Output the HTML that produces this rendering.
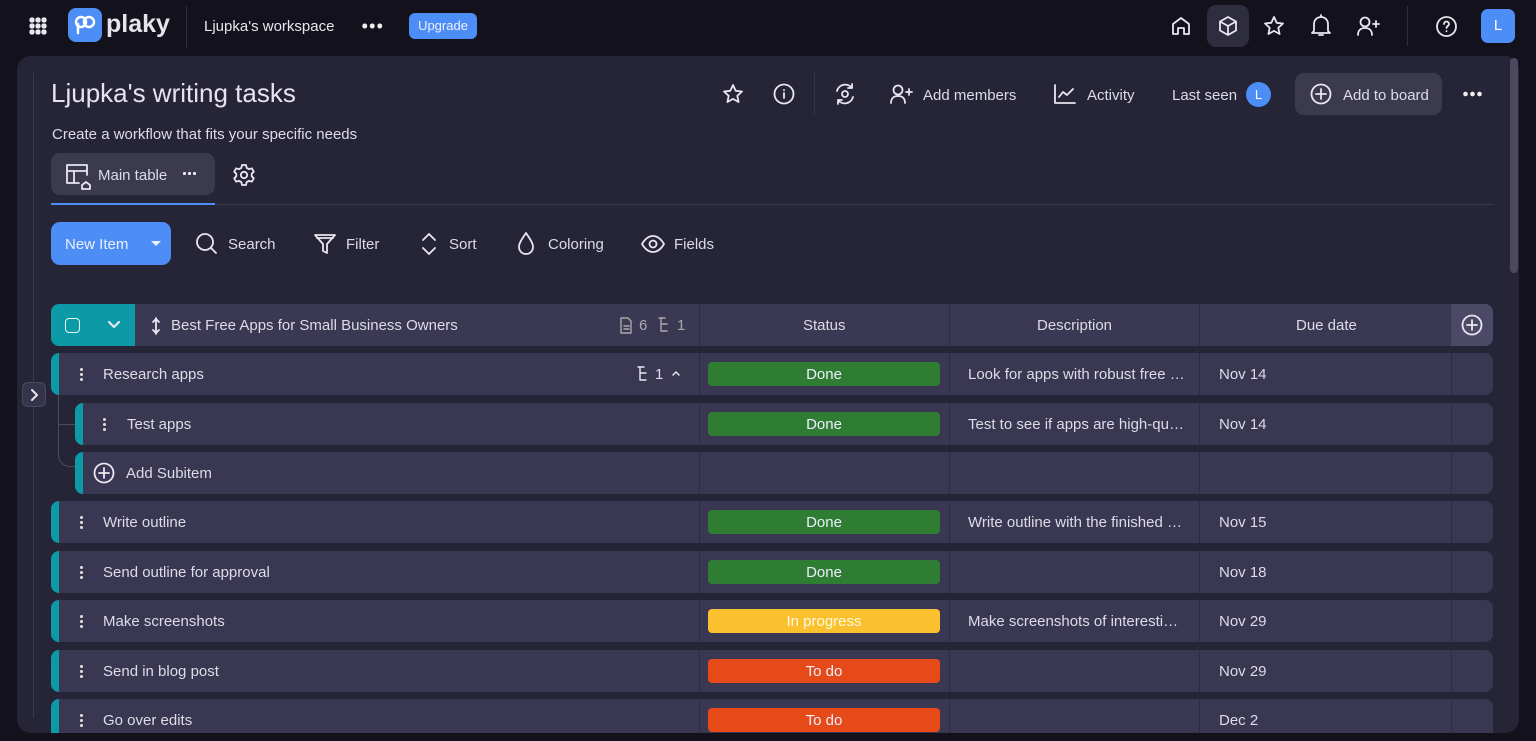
<!DOCTYPE html>
<html><head><meta charset="utf-8"><style>
*{box-sizing:border-box;margin:0;padding:0}
body{width:1536px;height:741px;overflow:hidden;background:#13121c;font-family:"Liberation Sans",sans-serif;color:#e4e3ee;position:relative}
.a{position:absolute}
svg{position:absolute;fill:none;stroke:#e8e7f0;stroke-width:1.8;stroke-linecap:round;stroke-linejoin:round}
.t{position:absolute;white-space:nowrap;font-size:15px;color:#dddce8}
.row{position:absolute;left:51px;width:1442px;height:42px;background:#393752;border-radius:8px;overflow:hidden}
.row .t{top:13px !important}
.row .st{position:absolute;left:0;top:0;width:8px;height:42px;background:#0b9aa6}
.row .div{position:absolute;top:0;width:1px;height:42px;background:#2c2b40}
.pill{position:absolute;left:657px;top:9px;width:232px;height:24px;border-radius:4px;text-align:center;line-height:25px;font-size:15px;color:#eef}
.dots{position:absolute;width:3px;height:14px;top:14px;background:radial-gradient(circle,#ddd 1.4px,transparent 1.6px) 0 0/3px 5px repeat-y}
</style></head><body>
<div class="a" style="left:29px;top:17px;width:18px;height:18px;background:radial-gradient(circle,#e8e8f0 2.6px,transparent 2.8px) 0 0/6px 6px"></div>
<div class="a" style="left:68px;top:8px;width:34px;height:34px;background:#4c8df6;border-radius:8px"></div>
<svg style="left:72px;top:12px" width="26" height="26" viewBox="0 0 26 26"><circle cx="9" cy="10" r="5" stroke="#fff" stroke-width="2.5"/><circle cx="17" cy="10" r="5" stroke="#fff" stroke-width="2.5"/><path d="M6 12v9" stroke="#fff" stroke-width="2.5"/></svg>
<div class="t" style="left:106px;top:10px;font-size:25px;font-weight:bold;color:#e4e4ea">plaky</div>
<div class="a" style="left:186px;top:6px;width:1px;height:42px;background:#2e2d3c"></div>
<div class="t" style="left:204px;top:18px;color:#e6e6ee">Ljupka's workspace</div>
<div class="a" style="left:361px;top:23px;width:22px;height:6px;background:radial-gradient(circle,#eee 2.4px,transparent 2.6px) 0 0/7.5px 6px repeat-x"></div>
<div class="a" style="left:409px;top:13px;width:68px;height:26px;background:#4c8df6;border-radius:6px;font-size:13px;text-align:center;line-height:26px;color:#eef">Upgrade</div>
<svg style="left:1170px;top:15px" width="22" height="22" viewBox="0 0 22 22"><path d="M3 19V9l8-6 8 6v10H14v-6h-6v6z"/></svg>
<div class="a" style="left:1207px;top:5px;width:42px;height:42px;background:#2e2d3d;border-radius:9px"></div>
<svg style="left:1217px;top:15px" width="22" height="22" viewBox="0 0 22 22"><path d="M11 2l8 4.5v9L11 20l-8-4.5v-9zM3 6.5l8 4.5 8-4.5M11 11v9"/></svg>
<svg style="left:1263px;top:15px" width="22" height="22" viewBox="0 0 22 22"><path d="M11 2l2.7 5.8 6.3.7-4.7 4.3 1.3 6.2L11 15.9 5.4 19l1.3-6.2L2 8.5l6.3-.7z"/></svg>
<svg style="left:1310px;top:14px" width="22" height="24" viewBox="0 0 22 24"><path d="M4 17V10a7 7 0 0114 0v7l2 2H2zM9 21h4M11 1v2"/></svg>
<svg style="left:1356px;top:15px" width="26" height="22" viewBox="0 0 26 22"><circle cx="9" cy="7" r="4.5"/><path d="M2 20c0-5 3-7 7-7s7 2 7 7M20 6v6M17 9h6"/></svg>
<div class="a" style="left:1407px;top:6px;width:1px;height:40px;background:#2e2d3c"></div>
<svg style="left:1435px;top:15px" width="23" height="23" viewBox="0 0 23 23"><circle cx="11.5" cy="11.5" r="9.5"/><path d="M9 9a2.5 2.5 0 115 0c0 2-2.5 2-2.5 4M11.5 16v.3"/></svg>
<div class="a" style="left:1481px;top:9px;width:34px;height:34px;background:#4c8df6;border-radius:7px;text-align:center;line-height:34px;font-size:15px;color:#fff">L</div>

<div class="a" style="left:17px;top:56px;width:1502px;height:677px;background:#262537;border-radius:14px"></div>
<div class="a" style="left:33px;top:73px;width:1px;height:645px;background:#3a394e"></div>
<div class="a" style="left:1510px;top:58px;width:8px;height:215px;background:#4a4960;border-radius:4px"></div>
<div class="t" style="left:51px;top:78px;font-size:26px;color:#e6e5ef">Ljupka's writing tasks</div>
<div class="t" style="left:52px;top:126px;font-size:15px">Create a workflow that fits your specific needs</div>
<svg style="left:722px;top:83px" width="22" height="22" viewBox="0 0 22 22"><path d="M11 2l2.7 5.8 6.3.7-4.7 4.3 1.3 6.2L11 15.9 5.4 19l1.3-6.2L2 8.5l6.3-.7z"/></svg>
<svg style="left:773px;top:83px" width="22" height="22" viewBox="0 0 22 22"><circle cx="11" cy="11" r="9.5"/><path d="M11 10v5M11 7v.3"/></svg>
<div class="a" style="left:814px;top:73px;width:1px;height:42px;background:#34334a"></div>
<svg style="left:833px;top:82px" width="24" height="24" viewBox="0 0 24 24"><path d="M4 9a8.5 8.5 0 0115-3M20 15a8.5 8.5 0 01-15 3M19 2v4h-4M5 22v-4h4"/><circle cx="12" cy="12" r="3"/></svg>
<svg style="left:889px;top:83px" width="26" height="22" viewBox="0 0 26 22"><circle cx="9" cy="7" r="4.5"/><path d="M2 20c0-5 3-7 7-7s7 2 7 7M20 6v6M17 9h6"/></svg>
<div class="t" style="left:923px;top:87px">Add members</div>
<svg style="left:1053px;top:83px" width="24" height="22" viewBox="0 0 24 22"><path d="M2 2v18h20M6 14l4-5 4 3 6-6"/></svg>
<div class="t" style="left:1087px;top:87px">Activity</div>
<div class="t" style="left:1172px;top:87px">Last seen</div>
<div class="a" style="left:1246px;top:82px;width:25px;height:25px;background:#4c8df6;border-radius:50%;text-align:center;line-height:25px;font-size:13px;color:#fff">L</div>
<div class="a" style="left:1295px;top:73px;width:147px;height:42px;background:#3b3a4f;border-radius:9px"></div>
<svg style="left:1310px;top:83px" width="22" height="22" viewBox="0 0 22 22"><circle cx="11" cy="11" r="9.5"/><path d="M11 6v10M6 11h10"/></svg>
<div class="t" style="left:1343px;top:87px">Add to board</div>
<div class="a" style="left:1462px;top:91px;width:20px;height:6px;background:radial-gradient(circle,#eee 2.2px,transparent 2.4px) 0 0/7px 6px repeat-x"></div>

<div class="a" style="left:51px;top:153px;width:164px;height:42px;background:#3b3a4f;border-radius:9px"></div>
<svg style="left:65px;top:163px" width="30" height="30" viewBox="0 0 30 30"><path d="M14 20H2V2h20v10M2 8h20M9 8v12"/><path d="M17 26v-4l4-3 4 3v4z"/></svg>
<div class="t" style="left:98px;top:167px">Main table</div>
<div class="a" style="left:182px;top:171px;width:14px;height:5px;background:radial-gradient(circle,#eee 1.5px,transparent 1.7px) 0 0/5px 5px repeat-x"></div>
<svg style="left:232px;top:163px" width="24" height="24" viewBox="0 0 24 24"><circle cx="12" cy="12" r="3.2"/><path d="M10 2h4l.6 2.8 2.4 1.4 2.8-.9 2 3.4-2.1 2v2.6l2.1 2-2 3.4-2.8-.9-2.4 1.4L14 22h-4l-.6-2.8-2.4-1.4-2.8.9-2-3.4 2.1-2v-2.6l-2.1-2 2-3.4 2.8.9 2.4-1.4z"/></svg>
<div class="a" style="left:51px;top:204px;width:1442px;height:1px;background:#3b3a50"></div>
<div class="a" style="left:51px;top:203px;width:164px;height:2px;background:#4c8df6"></div>

<div class="a" style="left:51px;top:222px;width:120px;height:43px;background:#4c8df6;border-radius:9px"></div>
<div class="t" style="left:65px;top:236px;color:#eef">New Item</div>
<div class="a" style="left:151px;top:241px;border-left:5px solid transparent;border-right:5px solid transparent;border-top:5px solid #eef"></div>
<svg style="left:195px;top:232px" width="24" height="24" viewBox="0 0 24 24"><circle cx="10" cy="10" r="8"/><path d="M16 16l5 5"/></svg>
<div class="t" style="left:228px;top:236px">Search</div>
<svg style="left:313px;top:232px" width="24" height="24" viewBox="0 0 24 24"><path d="M2 3h20l-8 9v9l-4-2v-7z M4 6h16"/></svg>
<div class="t" style="left:346px;top:236px">Filter</div>
<svg style="left:419px;top:232px" width="20" height="24" viewBox="0 0 20 24"><path d="M4 8l6-6 6 6M4 16l6 6 6-6"/></svg>
<div class="t" style="left:449px;top:236px">Sort</div>
<svg style="left:516px;top:231px" width="20" height="26" viewBox="0 0 20 26"><path d="M10 2C6 8 3 12 3 16a7 7 0 0014 0c0-4-3-8-7-14z"/></svg>
<div class="t" style="left:548px;top:236px">Coloring</div>
<svg style="left:640px;top:232px" width="26" height="24" viewBox="0 0 26 24"><path d="M2 12c3-5 7-8 11-8s8 3 11 8c-3 5-7 8-11 8s-8-3-11-8z"/><circle cx="13" cy="12" r="3.5"/></svg>
<div class="t" style="left:674px;top:236px">Fields</div>

<div class="row" style="top:304px;background:#3a3852">
 <div class="a" style="left:0;top:0;width:84px;height:42px;background:#0b9aa6"></div>
 <div class="a" style="left:14px;top:14px;width:15px;height:15px;border:1.8px solid #e8f6f8;border-radius:4px"></div>
 <svg style="left:56px;top:14px" width="14" height="14" viewBox="0 0 14 14"><path d="M2 4l5 5 5-5" stroke-width="2.2"/></svg>
 <svg style="left:100px;top:13px" width="10" height="18" viewBox="0 0 10 18"><path d="M5 1v16M2 5l3-3 3 3M2 13l3 3 3-3"/></svg>
 <div class="t" style="left:120px">Best Free Apps for Small Business Owners</div>
 <svg style="left:568px;top:13px" width="14" height="17" viewBox="0 0 14 17"><path d="M2 1h7l3 3v12H2z M5 9h5M5 12h5" stroke="#aaa" stroke-width="1.4"/></svg>
 <div class="t" style="left:588px;color:#aaa">6</div>
 <svg style="left:606px;top:13px" width="14" height="16" viewBox="0 0 14 16"><path d="M2 1h6M4 1v13h6M4 7h6" stroke="#aaa" stroke-width="1.4"/></svg>
 <div class="t" style="left:626px;color:#aaa">1</div>
 <div class="div" style="left:648px"></div><div class="div" style="left:898px"></div><div class="div" style="left:1148px"></div>
 <div class="t" style="left:752px">Status</div>
 <div class="t" style="left:986px">Description</div>
 <div class="t" style="left:1245px">Due date</div>
 <div class="a" style="left:1400px;top:0;width:42px;height:42px;background:#4b4966"></div>
 <svg style="left:1410px;top:10px" width="22" height="22" viewBox="0 0 22 22"><circle cx="11" cy="11" r="9.5"/><path d="M11 6v10M6 11h10"/></svg>
</div>

<div class="a" style="left:22px;top:382px;width:24px;height:25px;background:#35344a;border:1px solid #4a4960;border-radius:6px"></div>
<svg style="left:28px;top:388px" width="12" height="14" viewBox="0 0 12 14"><path d="M4 2l5 5-5 5" stroke-width="2"/></svg>
<div class="a" style="left:58px;top:395px;width:20px;height:72px;border-left:1px solid #4a4960;border-bottom:1px solid #4a4960;border-bottom-left-radius:12px"></div>
<div class="a" style="left:58px;top:424px;width:18px;height:1px;background:#4a4960"></div>

<div class="row" style="top:353px"><div class="st"></div><div class="dots" style="left:29px"></div>
 <div class="t" style="left:52px">Research apps</div>
 <svg style="left:585px;top:13px" width="14" height="16" viewBox="0 0 14 16"><path d="M2 1h6M4 1v13h6M4 7h6" stroke-width="1.4"/></svg>
 <div class="t" style="left:604px">1</div>
 <svg style="left:620px;top:16px" width="10" height="8" viewBox="0 0 10 8"><path d="M2 6l3-3 3 3" stroke-width="1.5"/></svg>
 <div class="div" style="left:648px"></div><div class="div" style="left:898px"></div><div class="div" style="left:1148px"></div><div class="div" style="left:1400px"></div>
 <div class="pill" style="background:#2e7d32">Done</div>
 <div class="t" style="left:917px">Look for apps with robust free …</div>
 <div class="t" style="left:1168px">Nov 14</div></div>

<div class="row" style="top:403px;left:75px;width:1418px"><div class="st"></div><div class="dots" style="left:28px"></div>
 <div class="t" style="left:52px">Test apps</div>
 <div class="div" style="left:624px"></div><div class="div" style="left:874px"></div><div class="div" style="left:1124px"></div><div class="div" style="left:1376px"></div>
 <div class="pill" style="left:633px;background:#2e7d32">Done</div>
 <div class="t" style="left:893px">Test to see if apps are high-qu…</div>
 <div class="t" style="left:1144px">Nov 14</div></div>

<div class="row" style="top:452px;left:75px;width:1418px"><div class="st"></div>
 <svg style="left:18px;top:10px" width="22" height="22" viewBox="0 0 22 22"><circle cx="11" cy="11" r="9.5"/><path d="M11 6v10M6 11h10"/></svg>
 <div class="t" style="left:51px">Add Subitem</div>
 <div class="div" style="left:624px"></div><div class="div" style="left:874px"></div><div class="div" style="left:1124px"></div><div class="div" style="left:1376px"></div></div>

<div class="row" style="top:501px"><div class="st"></div><div class="dots" style="left:29px"></div>
 <div class="t" style="left:52px">Write outline</div>
 <div class="div" style="left:648px"></div><div class="div" style="left:898px"></div><div class="div" style="left:1148px"></div><div class="div" style="left:1400px"></div>
 <div class="pill" style="background:#2e7d32">Done</div>
 <div class="t" style="left:917px">Write outline with the finished …</div>
 <div class="t" style="left:1168px">Nov 15</div></div>

<div class="row" style="top:551px"><div class="st"></div><div class="dots" style="left:29px"></div>
 <div class="t" style="left:52px">Send outline for approval</div>
 <div class="div" style="left:648px"></div><div class="div" style="left:898px"></div><div class="div" style="left:1148px"></div><div class="div" style="left:1400px"></div>
 <div class="pill" style="background:#2e7d32">Done</div>
 <div class="t" style="left:1168px">Nov 18</div></div>

<div class="row" style="top:600px"><div class="st"></div><div class="dots" style="left:29px"></div>
 <div class="t" style="left:52px">Make screenshots</div>
 <div class="div" style="left:648px"></div><div class="div" style="left:898px"></div><div class="div" style="left:1148px"></div><div class="div" style="left:1400px"></div>
 <div class="pill" style="background:#fbc02d;color:#fff8e0">In progress</div>
 <div class="t" style="left:917px">Make screenshots of interesti…</div>
 <div class="t" style="left:1168px">Nov 29</div></div>

<div class="row" style="top:650px"><div class="st"></div><div class="dots" style="left:29px"></div>
 <div class="t" style="left:52px">Send in blog post</div>
 <div class="div" style="left:648px"></div><div class="div" style="left:898px"></div><div class="div" style="left:1148px"></div><div class="div" style="left:1400px"></div>
 <div class="pill" style="background:#e64a19">To do</div>
 <div class="t" style="left:1168px">Nov 29</div></div>

<div class="row" style="top:699px;height:34px;border-radius:8px 8px 0 0"><div class="st"></div><div class="dots" style="left:29px"></div>
 <div class="t" style="left:52px">Go over edits</div>
 <div class="div" style="left:648px"></div><div class="div" style="left:898px"></div><div class="div" style="left:1148px"></div><div class="div" style="left:1400px"></div>
 <div class="pill" style="background:#e64a19">To do</div>
 <div class="t" style="left:1168px">Dec 2</div></div>
<div class="a" style="left:0;top:733px;width:1536px;height:8px;background:#13121c"></div>
</body></html>
